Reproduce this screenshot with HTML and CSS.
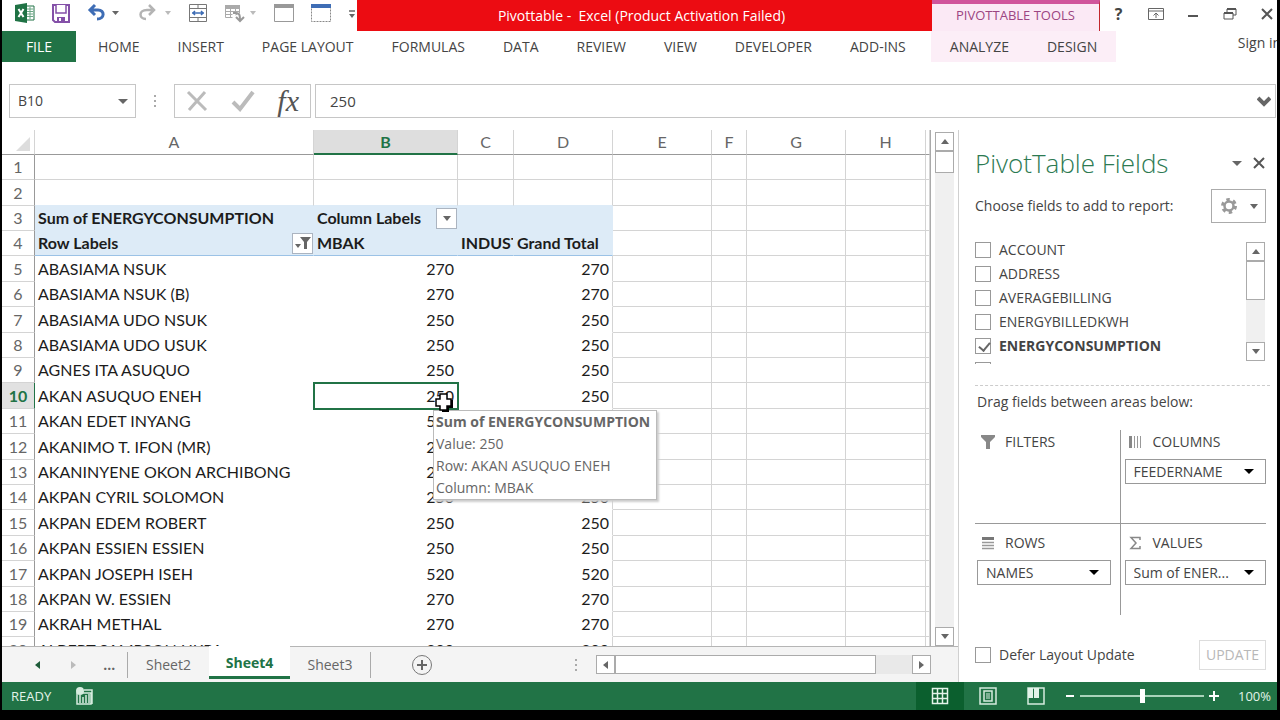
FILE: index.html
```html
<!DOCTYPE html>
<html lang="en">
<head>
    <meta charset="UTF-8">
    <meta name="viewport" content="width=device-width, initial-scale=1.0">
    <title>Pivottable - Excel</title>
    <link rel="stylesheet" href="styles.css">
</head>
<body>
    <div class="app">
        <header class="titlebar">
            <div class="quick">
                <svg width="20" height="20" viewBox="0 0 20 20"><path d="M11 3h8v14h-8z" fill="#fff" stroke="#217346"/><path d="M12 6h6M12 8.500h6M12 11h6M12 13.500h6M15 4v12" stroke="#6aa685"/><path d="M0 2 12 0v20L0 18z" fill="#1f7244"/><path d="m3.500 6 5 8M8.500 6l-5 8" stroke="#fff" stroke-width="2"/></svg>
                <button class="tool" aria-label="Save"><svg width="18" height="20" viewBox="0 0 18 20"><path d="M1 2h16v17H3l-2-2z" fill="#fff" stroke="#8450a8" stroke-width="2"/><path d="M4 2v8h10V2" fill="#fff" stroke="#8450a8" stroke-width="1.500"/><path d="M5 19v-5h8v5z" fill="#8450a8"/><path d="M7 15h2v3H7z" fill="#fff"/></svg></button>
                <button class="tool" aria-label="Undo"><svg width="34" height="20" viewBox="0 0 34 20"><path d="M3 7h8c7 0 7 9-1 9M8 2 3 7l5 5" fill="none" stroke="#3e6db5" stroke-width="3"/><path d="M25 8h7l-3.500 4z" fill="#666"/></svg></button>
                <button class="tool" aria-label="Redo"><svg width="34" height="20" viewBox="0 0 34 20"><path d="M16 7H9C0 7 1 16 8 16M11 2l5 5-5 5" fill="none" stroke="#b4b4b4" stroke-width="2.500"/><path d="M27 8h6l-3 4z" fill="#bbb"/></svg></button>
                <button class="tool" aria-label="Merge cells"><svg width="18" height="20" viewBox="0 0 18 20"><path d="M.5 1.500h17v17H.5zM.5 5.500h17M.5 14.500h17M9 1v4M9 15v4" fill="none" stroke="#777"/><path d="M3 10h12M6 8l-2 2 2 2M12 8l2 2-2 2" fill="none" stroke="#3e6db5" stroke-width="1.500"/></svg></button>
                <button class="tool" aria-label="Insert table"><svg width="33" height="20" viewBox="0 0 33 20"><path d="M1 2h15v4H1z" fill="#aaa"/><path d="M1.500 2.500h14v12h-14zM1 8.500h15M1 11.500h15M6.500 3v12M11.500 3v12" fill="none" stroke="#aaa"/><path d="M10 11v3h8m-3-4v6" stroke="#fff" stroke-width="3" fill="none"/><path d="M9 10h3c4 0 4 3 4 8M12 14l4 4 4-4" fill="none" stroke="#999" stroke-width="2"/><path d="M26 8h6l-3 4z" fill="#bbb"/></svg></button>
                <button class="tool" aria-label="Window"><svg width="20" height="20" viewBox="0 0 20 20"><path d="M.5 1.500h19v17H.5z" fill="#fff" stroke="#999"/><path d="M0 1h20v4H0z" fill="#999"/></svg></button>
                <button class="tool" aria-label="Form"><svg width="20" height="20" viewBox="0 0 20 20"><path d="M.5 1.500h19v17H.5z" fill="#fff" stroke="#888" stroke-dasharray="2 1"/><path d="M0 1h20v4H0z" fill="#3e6db5"/></svg></button>
                <button class="tool" aria-label="Customize toolbar"><svg width="8" height="20" viewBox="0 0 8 20"><path d="M1 8h6" stroke="#666" stroke-width="1.500"/><path d="M1 11h6l-3 4z" fill="#666"/></svg></button>
            </div>
            <h1 class="caption">Pivottable -&nbsp; Excel (Product Activation Failed)</h1>
            <div class="context">PIVOTTABLE TOOLS</div>
            <div class="winbtns">
                <button class="tool help" aria-label="Help">?</button>
                <button class="tool" aria-label="Ribbon display"><svg width="16" height="14" viewBox="0 0 16 14"><path d="M.5 1.500h15v11H.5zM.5 4h15M8 11V6M5.500 8.500 8 6l2.500 2.500" fill="none" stroke="#666"/></svg></button>
                <button class="tool" aria-label="Minimize"><svg width="12" height="14" viewBox="0 0 12 14"><path d="M1 9h10" stroke="#555" stroke-width="2"/></svg></button>
                <button class="tool" aria-label="Restore"><svg width="14" height="14" viewBox="0 0 14 14"><path d="M1 6h9v6H1zM4 5V2h9v6h-3" fill="none" stroke="#555"/><path d="M1 6h9M4 2h9" stroke="#555" stroke-width="2"/></svg></button>
                <button class="tool" aria-label="Close"><svg width="14" height="14" viewBox="0 0 14 14"><path d="m2 2 10 10M12 2 2 12" stroke="#555" stroke-width="2"/></svg></button>
            </div>
        </header>

        <nav class="ribbon">
            <a href="#" class="file">FILE</a>
            <a href="#">HOME</a>
            <a href="#">INSERT</a>
            <a href="#">PAGE LAYOUT</a>
            <a href="#">FORMULAS</a>
            <a href="#">DATA</a>
            <a href="#">REVIEW</a>
            <a href="#">VIEW</a>
            <a href="#">DEVELOPER</a>
            <a href="#">ADD-INS</a>
            <div class="pivottabs">
                <a href="#">ANALYZE</a>
                <a href="#">DESIGN</a>
            </div>
            <a href="#" class="signin">Sign in</a>
        </nav>

        <div class="formulabar">
            <div class="namebox">
                <input type="text" value="B10" aria-label="Name box">
                <button class="tool" aria-label="Names"><i class="down big"></i></button>
            </div>
            <svg class="grip" width="4" height="16" viewBox="0 0 4 16"><path d="M1 2h2v2H1zM1 7h2v2H1zM1 12h2v2H1z" fill="#aaa"/></svg>
            <div class="fxbox">
                <button class="tool" aria-label="Cancel"><svg width="22" height="22" viewBox="0 0 22 22"><path d="m2 2 18 18M19 2 3 20" stroke="#bbb" stroke-width="3"/></svg></button>
                <button class="tool" aria-label="Enter"><svg width="24" height="22" viewBox="0 0 24 22"><path d="m2 12 7 7L22 2" fill="none" stroke="#bbb" stroke-width="4"/></svg></button>
                <button class="tool fx" aria-label="Insert function">fx</button>
            </div>
            <div class="formula">
                <input type="text" value="250" aria-label="Formula">
                <button class="tool" aria-label="Expand formula bar"><svg width="14" height="12" viewBox="0 0 14 12"><path d="m1 3 6 6 6-6" fill="none" stroke="#666" stroke-width="4"/></svg></button>
            </div>
        </div>

        <main class="main">
            <section class="book">
                <div class="gridwrap">
                    <div class="grid">
                        <table>
                            <colgroup>
                                <col class="c-num"><col class="c-a"><col class="c-b"><col class="c-c"><col class="c-d"><col class="c-d"><col class="c-f"><col class="c-d"><col class="c-h"><col>
                            </colgroup>
                            <thead>
                                <tr><th><svg class="corner" width="14" height="14" viewBox="0 0 14 14"><path d="M14 0v14H0z" fill="#ddd"/></svg></th><th>A</th><th class="on">B</th><th>C</th><th>D</th><th>E</th><th>F</th><th>G</th><th>H</th><th></th></tr>
                            </thead>
                            <tbody>
                                <tr><th>1</th><td></td><td></td><td></td><td></td><td></td><td></td><td></td><td></td><td></td></tr>
                                <tr class="pre"><th>2</th><td></td><td></td><td></td><td></td><td></td><td></td><td></td><td></td><td></td></tr>
                                <tr class="head"><th>3</th><td>Sum of ENERGYCONSUMPTION</td><td><div class="cell">Column Labels<button class="filter" aria-label="Column filter"><i class="down"></i></button></div></td><td></td><td></td><td></td><td></td><td></td><td></td><td></td></tr>
                                <tr class="head last"><th>4</th><td><div class="cell">Row Labels<button class="filter" aria-label="Row filter"><svg width="16" height="14" viewBox="0 0 16 14"><path d="M5 1h11l-4 5v7H9V6z" fill="#666"/><path d="M0 8h6l-3 4z" fill="#666"/></svg></button></div></td><td>MBAK</td><td>INDUSTRIAL</td><td>Grand Total</td><td></td><td></td><td></td><td></td><td></td></tr>
                                <tr class="row"><th>5</th><td>ABASIAMA NSUK</td><td>270</td><td></td><td>270</td><td></td><td></td><td></td><td></td><td></td></tr>
                                <tr class="row"><th>6</th><td>ABASIAMA NSUK (B)</td><td>270</td><td></td><td>270</td><td></td><td></td><td></td><td></td><td></td></tr>
                                <tr class="row"><th>7</th><td>ABASIAMA UDO NSUK</td><td>250</td><td></td><td>250</td><td></td><td></td><td></td><td></td><td></td></tr>
                                <tr class="row"><th>8</th><td>ABASIAMA UDO USUK</td><td>250</td><td></td><td>250</td><td></td><td></td><td></td><td></td><td></td></tr>
                                <tr class="row"><th>9</th><td>AGNES ITA ASUQUO</td><td>250</td><td></td><td>250</td><td></td><td></td><td></td><td></td><td></td></tr>
                                <tr class="row"><th class="on">10</th><td>AKAN ASUQUO ENEH</td><td class="selected">250
                                    <div class="tip"><b>Sum of ENERGYCONSUMPTION</b><br>Value: 250<br>Row: AKAN ASUQUO ENEH<br>Column: MBAK</div>
                                    <svg class="cursor" width="20" height="20" viewBox="0 0 20 20"><path d="M8 19h6v-4h4V8" fill="none" stroke="#000" stroke-width="2"/><path d="M6 2h7v5h4v7h-4v4H6v-4H2V7h4z" fill="#fff" stroke="#000" stroke-width="1.500"/></svg>
                                </td><td></td><td>250</td><td></td><td></td><td></td><td></td><td></td></tr>
                                <tr class="row"><th>11</th><td>AKAN EDET INYANG</td><td>520</td><td></td><td>520</td><td></td><td></td><td></td><td></td><td></td></tr>
                                <tr class="row"><th>12</th><td>AKANIMO T. IFON (MR)</td><td>270</td><td></td><td>270</td><td></td><td></td><td></td><td></td><td></td></tr>
                                <tr class="row"><th>13</th><td>AKANINYENE OKON ARCHIBONG</td><td>250</td><td></td><td>250</td><td></td><td></td><td></td><td></td><td></td></tr>
                                <tr class="row"><th>14</th><td>AKPAN CYRIL SOLOMON</td><td>250</td><td></td><td>250</td><td></td><td></td><td></td><td></td><td></td></tr>
                                <tr class="row"><th>15</th><td>AKPAN EDEM ROBERT</td><td>250</td><td></td><td>250</td><td></td><td></td><td></td><td></td><td></td></tr>
                                <tr class="row"><th>16</th><td>AKPAN ESSIEN ESSIEN</td><td>250</td><td></td><td>250</td><td></td><td></td><td></td><td></td><td></td></tr>
                                <tr class="row"><th>17</th><td>AKPAN JOSEPH ISEH</td><td>520</td><td></td><td>520</td><td></td><td></td><td></td><td></td><td></td></tr>
                                <tr class="row"><th>18</th><td>AKPAN W. ESSIEN</td><td>270</td><td></td><td>270</td><td></td><td></td><td></td><td></td><td></td></tr>
                                <tr class="row"><th>19</th><td>AKRAH METHAL</td><td>270</td><td></td><td>270</td><td></td><td></td><td></td><td></td><td></td></tr>
                                <tr class="row"><th>20</th><td>ALBERT SAMPSON UKPA</td><td>200</td><td></td><td>200</td><td></td><td></td><td></td><td></td><td></td></tr>
                            </tbody>
                        </table>
                    </div>
                    <div class="vscroll">
                        <button class="sbtn" aria-label="Scroll up"><i class="up"></i></button>
                        <div class="thumb"></div>
                        <button class="sbtn end" aria-label="Scroll down"><i class="down"></i></button>
                    </div>
                </div>
                <div class="sheetbar">
                    <div class="sheetnav">
                        <button class="tool" aria-label="Previous sheet"><i class="left green"></i></button>
                        <button class="tool" aria-label="Next sheet"><i class="right pale"></i></button>
                        <button class="tool more" aria-label="More sheets">...</button>
                    </div>
                    <a href="#" class="sheet">Sheet2</a>
                    <a href="#" class="sheet active">Sheet4</a>
                    <a href="#" class="sheet">Sheet3</a>
                    <button class="tool add" aria-label="New sheet"><svg width="22" height="22" viewBox="0 0 22 22"><circle cx="11" cy="11" r="9.500" fill="none" stroke="#777"/><path d="M11 6v10M6 11h10" stroke="#666" stroke-width="2"/></svg></button>
                    <svg class="split" width="4" height="16" viewBox="0 0 4 16"><path d="M1 2h2v2H1zM1 7h2v2H1zM1 12h2v2H1z" fill="#aaa"/></svg>
                    <div class="hscroll">
                        <button class="sbtn" aria-label="Scroll left"><i class="left"></i></button>
                        <div class="thumb"></div>
                        <button class="sbtn end" aria-label="Scroll right"><i class="right"></i></button>
                    </div>
                </div>
            </section>

            <aside class="pane">
                <div class="panehead">
                    <h2>PivotTable Fields</h2>
                    <button class="tool" aria-label="Pane options"><i class="down big"></i></button>
                    <button class="tool" aria-label="Close pane"><svg width="14" height="14" viewBox="0 0 14 14"><path d="m2 2 10 10M12 2 2 12" stroke="#555" stroke-width="2"/></svg></button>
                </div>
                <div class="choose">
                    <span>Choose fields to add to report:</span>
                    <button class="gear" aria-label="Tools"><svg width="18" height="18" viewBox="0 0 18 18"><circle cx="9" cy="9" r="6.500" fill="none" stroke="#999" stroke-width="3" stroke-dasharray="3.400 3.400"/><circle cx="9" cy="9" r="4.500" fill="none" stroke="#999" stroke-width="2.500"/></svg><i class="down"></i></button>
                </div>
                <div class="fields">
                    <div class="list">
                        <label><input type="checkbox">ACCOUNT</label>
                        <label><input type="checkbox">ADDRESS</label>
                        <label><input type="checkbox">AVERAGEBILLING</label>
                        <label><input type="checkbox">ENERGYBILLEDKWH</label>
                        <label class="checked"><input type="checkbox" checked>ENERGYCONSUMPTION</label>
                        <label><input type="checkbox" aria-label="Next field"></label>
                    </div>
                    <div class="vscroll small">
                        <button class="sbtn" aria-label="Fields up"><i class="up"></i></button>
                        <div class="thumb"></div>
                        <button class="sbtn end" aria-label="Fields down"><i class="down"></i></button>
                    </div>
                </div>
                <p class="drag">Drag fields between areas below:</p>
                <div class="areas">
                    <div class="area">
                        <h3><svg width="14" height="14" viewBox="0 0 14 14"><path d="M0 0h14v2L9 7v7H5V7L0 2z" fill="#888"/></svg>FILTERS</h3>
                    </div>
                    <div class="area">
                        <h3><svg width="14" height="14" viewBox="0 0 14 14"><path d="M0 1h3v12H0z" fill="#888"/><path d="M5.500 1v12M8.500 1v12M11.500 1v12" stroke="#999"/></svg>COLUMNS</h3>
                        <div class="drop"><select aria-label="Columns"><option>FEEDERNAME</option></select></div>
                    </div>
                    <div class="area">
                        <h3><svg width="14" height="14" viewBox="0 0 14 14"><path d="M1 1h12v3H1z" fill="#777"/><path d="M1 6.500h12M1 9.500h12M1 12.500h12" stroke="#999" stroke-width="1.500"/></svg>ROWS</h3>
                        <div class="drop"><select aria-label="Rows"><option>NAMES</option></select></div>
                    </div>
                    <div class="area">
                        <h3><svg width="14" height="14" viewBox="0 0 14 14"><path d="M11 4V1.500H2L7 7l-5 5.500h9V10" fill="none" stroke="#888" stroke-width="1.500"/></svg>VALUES</h3>
                        <div class="drop"><select aria-label="Values"><option>Sum of ENER...</option></select></div>
                    </div>
                </div>
                <div class="defer">
                    <label><input type="checkbox">Defer Layout Update</label>
                    <button class="update" disabled>UPDATE</button>
                </div>
            </aside>
        </main>

        <footer class="status">
            <span>READY</span>
            <svg class="macro" width="18" height="18" viewBox="0 0 18 18"><path d="M2 6h14v11H2zM9 3h8v14" fill="none" stroke="#d5ecde" stroke-width="1.500"/><path d="M5 8v8M8 10v6M11 8v8M14 7v9" stroke="#d5ecde" stroke-width="1.500"/><circle cx="5" cy="4" r="4" fill="#d5ecde"/></svg>
            <div class="views">
                <button class="tool on" aria-label="Normal view"><svg width="18" height="18" viewBox="0 0 18 18"><path d="M1.500 1.500h15v15h-15zM1 6.500h16M1 11.500h16M6.500 1v16M11.500 1v16" fill="none" stroke="#e3f3e9" stroke-width="1.500"/></svg></button>
                <button class="tool" aria-label="Page layout view"><svg width="18" height="18" viewBox="0 0 18 18"><path d="M1 1h16v16H1zM5 4h8v10H5z" fill="none" stroke="#d5ecde" stroke-width="1.500"/><path d="M7 7h4M7 9h4M7 11h4" stroke="#d5ecde"/></svg></button>
                <button class="tool" aria-label="Page break view"><svg width="18" height="18" viewBox="0 0 18 18"><path d="M1 1h16v16H1z" fill="none" stroke="#d5ecde" stroke-width="1.500"/><path d="M1 1h5v10H1zM7 1h5v10H7z" fill="#e3f3e9"/></svg></button>
            </div>
            <button class="tool" aria-label="Zoom out"><svg width="10" height="10" viewBox="0 0 10 10"><path d="M1 5h8" stroke="#fff" stroke-width="2"/></svg></button>
            <input type="range" class="zoom" min="0" max="100" value="50" aria-label="Zoom">
            <button class="tool" aria-label="Zoom in"><svg width="10" height="10" viewBox="0 0 10 10"><path d="M0 5h10M5 0v10" stroke="#fff" stroke-width="2"/></svg></button>
            <span class="percent">100%</span>
        </footer>
    </div>
</body>
</html>
```
FILE: styles.css
```css
*{padding:0;margin: 0;box-sizing: border-box;}
body{background: #000;color: #444;font: 14px/20px "Open Sans","Noto Sans",sans-serif;}
a{color: inherit;text-decoration: none;}
button,input,select{font: inherit;color: inherit;}
h1,h2,h3{font-weight: normal;font-size: 14px;}
svg{display: block;flex: none;}
.app{height: 100vh;border: solid #000;border-width: 0 3px 10px 2px;background: #fff;display: flex;flex-direction: column;overflow: hidden;}
.tool{background: none;border: 0;display: flex;align-items: center;justify-content: center;}

/* triangles */
.down,.up,.left,.right{flex: none;border: 4px solid transparent;}
.down{border-top: 5px solid #666;border-bottom: 0;}
.up{border-bottom: 5px solid #666;border-top: 0;}
.left{border-right: 5px solid #666;border-left: 0;}
.right{border-left: 5px solid #666;border-right: 0;}
.down.big{border-width: 5px 5px 0;}
.green{border-right-color: #1f5c3a;}
.pale{border-left-color: #bbb;}

/* title bar */
.titlebar{display: flex;height: 31px;flex: none;}
.quick{display: flex;gap: 17px;padding: 3px 1px 0 13px;align-items: flex-start;}
.caption{flex: 1;background: #ec0c12;color: #fff;text-align: center;line-height: 31px;white-space: nowrap;padding-right: 6px;}
.context{width: 168px;background: #fbe9f5;border-top: 4px solid #d0549b;border-right: 1px solid #c2272d;color: #9c4582;text-align: center;line-height: 23px;font-size: 13px;}
.winbtns{display: flex;width: 185px;height: 28px;margin-right: -8px;}
.winbtns .tool{flex: 1;}
.help{font-weight: bold;font-size: 16px;}

/* ribbon tabs */
.ribbon{display: flex;height: 31px;flex: none;line-height: 32px;white-space: nowrap;overflow: hidden;}
.ribbon a{padding: 0 19px;}
.ribbon .file{background: #217346;color: #fff;width: 74px;padding: 0;text-align: center;margin-right: 3px;}
.pivottabs{display: flex;background: #fceef7;margin-left: 6px;}
.ribbon .signin{margin-left: auto;margin-right: -4px;padding: 0;line-height: 24px;}

/* formula bar */
.formulabar{display: flex;height: 34px;flex: none;margin: 22px 1px 12px 7px;}
.formulabar>div{border: 1px solid #c6c6c6;display: flex;align-items: center;}
.formulabar input{border: 0;outline: 0;background: none;min-width: 0;flex: 1;}
.namebox{width: 127px;padding: 0 7px 0 8px;}
.grip{margin: 9px 17px 0 17px;}
.fxbox{width: 137px;justify-content: space-between;padding: 0 11px;}
.fx{font: italic 30px/28px "Liberation Serif",serif;color: #555;}
.formula{flex: 1;margin-left: 4px;padding: 0 4px 0 14px;font-size: 15px;}

/* workbook */
.main{display: flex;flex: 1;min-height: 0;}
.book{flex: 1;min-width: 0;display: flex;flex-direction: column;}
.gridwrap{display: flex;flex: 1;min-height: 0;}
.grid{flex: 1;min-width: 0;overflow: hidden;}
table{width: 100%;table-layout: fixed;border-collapse: separate;border-spacing: 0;font-family: Lato,sans-serif;font-size: 16px;color: #1c1c1c;border-right: 1px solid #aaa;}
.c-num{width: 33px;}
.c-a{width: 279px;}
.c-b{width: 144px;}
.c-c{width: 56px;}
.c-d{width: 99px;}
.c-f{width: 35px;}
.c-h{width: 80px;}
tr{height: 25px;}
tbody tr:nth-child(5n),tbody tr:nth-child(5n+2){height: 26px;}
td,th{line-height: 24px;white-space: nowrap;overflow: hidden;border: solid #d4d4d4;border-width: 0 1px 1px 0;}
td{padding: 0 3px;}
th{font-weight: normal;color: #666;}
thead th{border-bottom-color: #999;line-height: 22px;}
thead th.on{background: #dedede;color: #217346;font-weight: bold;border-bottom: 2px solid #217346;}
tbody th{border-right-color: #999;}
tbody th.on{background: #e1e1e1;color: #217346;font-weight: bold;border-right-color: #217346;}
.corner{margin: 4px 0 0 14px;}
.pre td:nth-child(-n+5){border-bottom-color: #ddebf7;}
.head td:nth-child(-n+5){background: #ddebf7;border-color: #ddebf7;font-weight: bold;}
.last td:nth-child(-n+5){border-bottom-color: #9bc2e6;}
.row td:nth-child(-n+5){border-color: #fff;}
.row td:nth-child(5){border-right-color: #d4d4d4;}
.row td:nth-child(3),.row td:nth-child(5){text-align: right;}
.cell{display: flex;justify-content: space-between;align-items: center;height: 24px;margin-right: -3px;}
.filter{width: 21px;height: 21px;border: 1px solid #abb4c0;background: #fff;display: flex;align-items: center;justify-content: center;}
.row .selected{position: relative;overflow: visible;outline: 2px solid #217346;outline-offset: -1px;}
.tip{position: absolute;left: 119px;top: 27px;z-index: 2;min-width: 224px;background: #fff;border: 1px solid #bbb;box-shadow: 2px 2px 2px #ccc;padding: 0 2px;font: 14px/22px "Open Sans",sans-serif;color: #666;text-align: left;}
.cursor{position: absolute;right: 3px;top: 9px;z-index: 3;}

/* scroll bars */
.sbtn{width: 19px;height: 19px;border: 1px solid #ababab;background: #fff;display: flex;align-items: center;justify-content: center;flex: none;}
.thumb{border: 1px solid #ababab;background: #fff;}
.vscroll{display: flex;flex-direction: column;width: 19px;background: #f0f0f0;margin: 2px 4px 0;flex: none;}
.vscroll .thumb{height: 22px;}
.vscroll .end{margin-top: auto;}
.hscroll{display: flex;width: 335px;height: 19px;background: #e9e9e9;margin-right: 27px;}
.hscroll .thumb{width: 261px;}
.hscroll .end{margin-left: auto;}

/* sheet tabs */
.sheetbar{display: flex;align-items: center;height: 36px;flex: none;background: #f4f4f4;border-top: 1px solid #b5b5b5;color: #666;}
.sheetnav{display: flex;width: 126px;padding-left: 18px;height: 26px;border-right: 1px solid #aaa;}
.sheetnav .tool{width: 36px;}
.more{font-weight: bold;}
.sheet{width: 81px;text-align: center;line-height: 32px;}
.sheet.active{background: #fff;color: #217346;font-weight: bold;border-bottom: 3px solid #217346;align-self: flex-start;margin-top: -1px;height: 33px;line-height: 34px;}
.sheet:nth-of-type(3){line-height: 26px;border-right: 1px solid #aaa;}
.add{margin-left: 40px;}
.split{margin-left: auto;margin-right: 18px;}

/* pivot pane */
.pane{width: 319px;flex: none;border-left: 1px solid #d0d0d0;padding: 13px 11px 12px 16px;display: flex;flex-direction: column;}
.panehead{display: flex;align-items: center;height: 40px;margin-right: -4px;}
.panehead h2{flex: 1;font-size: 26px;font-weight: 300;color: #2d7a52;}
.panehead .tool{width: 22px;}
.choose{display: flex;align-items: center;justify-content: space-between;height: 34px;margin-top: 6px;flex: none;}
.gear{width: 55px;height: 34px;border: 1px solid #ababab;background: #fff;display: flex;align-items: center;justify-content: center;gap: 12px;}
.fields{display: flex;justify-content: space-between;height: 126px;margin-top: 15px;flex: none;}
.list{overflow: hidden;flex: 1;}
label{display: flex;align-items: center;gap: 8px;height: 24px;}
.checked{font-weight: bold;}
input[type=checkbox]{appearance: none;width: 16px;height: 16px;border: 1px solid #999;background: #fff;}
input[type=checkbox]:checked::before{content: "";display: block;width: 5px;height: 9px;margin: 1px 0 0 5px;border: solid #666;border-width: 0 2px 2px 0;transform: rotate(40deg);}
.small{margin: 4px 1px 3px;}
.small .thumb{height: 39px;}
.drag{border-top: 1px dashed #ccc;margin: 21px -4px 0 0;line-height: 32px;padding-left: 2px;}
.areas{display: grid;grid-template-columns: 1fr 1fr;grid-template-rows: 94px 91px;margin-top: 12px;}
.area:nth-child(odd){border-right: 1px solid #999;padding: 0 9px 0 2px;}
.area:nth-child(even){padding-left: 4px;}
.area:nth-child(-n+2){border-bottom: 1px solid #999;padding-top: 1px;}
.area:nth-child(n+3){padding-top: 8px;}
.area h3{display: flex;align-items: center;gap: 10px;line-height: 22px;padding-left: 4px;margin-bottom: 6px;}
.drop{position: relative;}
.drop select{appearance: none;width: 100%;height: 25px;border: 1px solid #999;border-radius: 0;background: #fff;padding: 0 8px;}
.drop::after{content: "";position: absolute;right: 12px;top: 10px;border: 5px solid transparent;border-top-color: #000;border-bottom: 0;}
.defer{display: flex;align-items: center;justify-content: space-between;margin-top: auto;}
.update{width: 67px;height: 30px;border: 1px solid #ddd;background: #fff;color: #b8b8b8;}

/* status bar */
.status{height: 28px;flex: none;background: #217346;color: #e3f3e9;display: flex;align-items: center;padding: 0 6px 0 9px;font-size: 13px;}
.macro{margin-left: 24px;}
.views{display: flex;height: 28px;margin-left: auto;margin-right: 5px;}
.views .tool{width: 48px;}
.views .on{background: #0b5f2e;}
.zoom{appearance: none;width: 124px;height: 14px;background: linear-gradient(#a9d3ba,#a9d3ba) center/100% 2px no-repeat;margin: 0 5px;}
.zoom::-webkit-slider-thumb{appearance: none;width: 5px;height: 14px;background: #fff;}
.percent{width: 52px;text-align: right;}
```
